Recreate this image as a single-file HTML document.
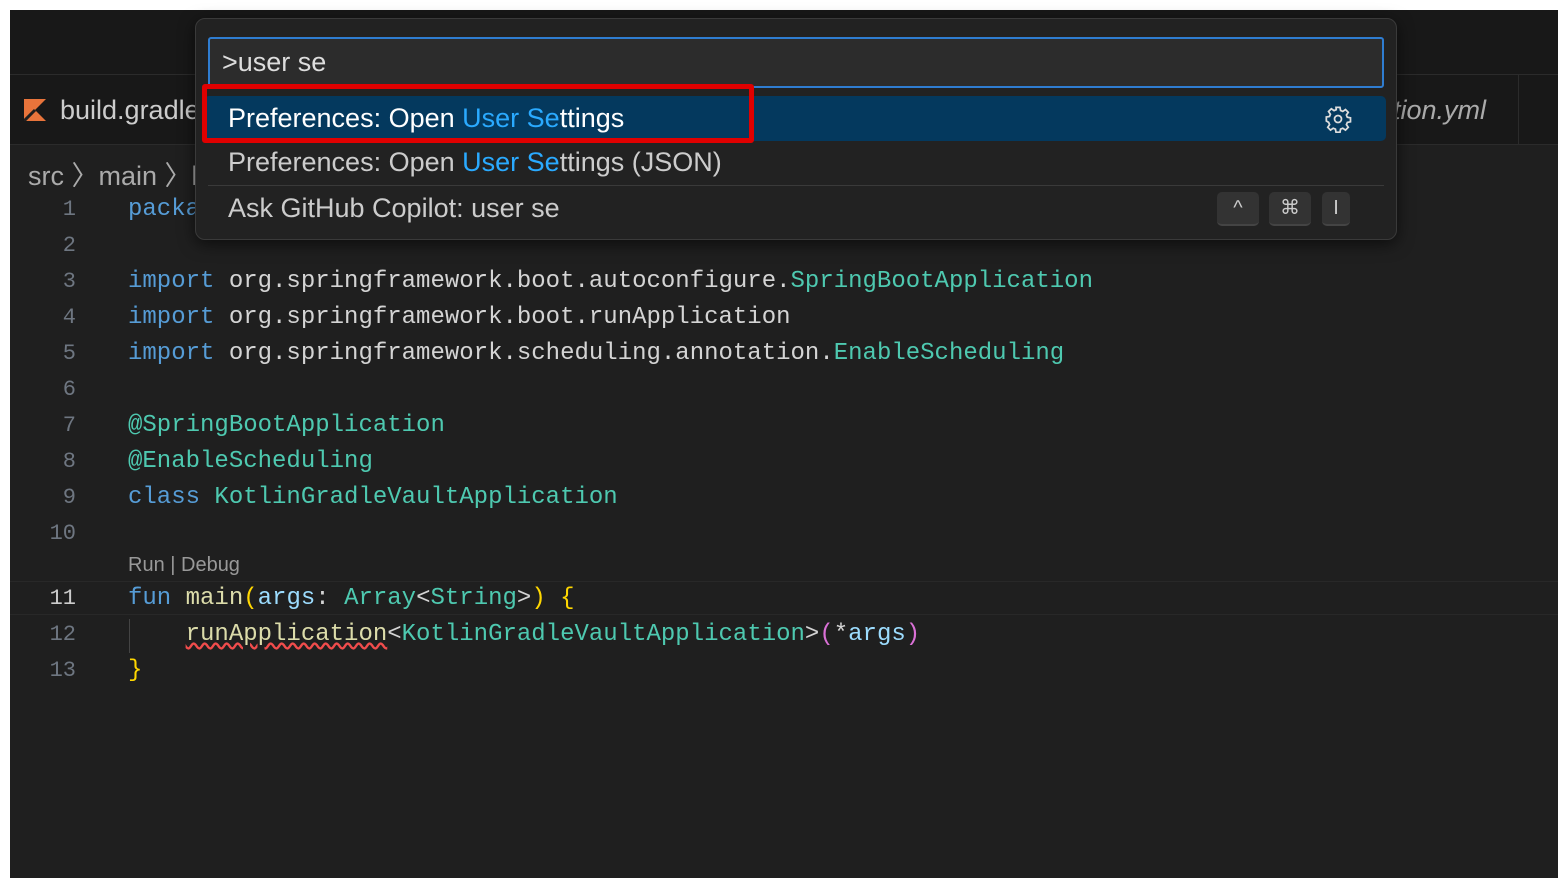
<!DOCTYPE html>
<html><head><meta charset="utf-8"><style>
*{margin:0;padding:0;box-sizing:border-box}
body{width:1568px;height:888px;background:#fff;position:relative;overflow:hidden;font-family:"Liberation Sans",sans-serif}
#win{position:absolute;left:10px;top:10px;width:1548px;height:868px;background:#1f1f1f;overflow:hidden}
.title{position:absolute;left:0;top:0;width:100%;height:65px;background:#181818;border-bottom:1px solid #2b2b2b}
.tabs{position:absolute;left:0;top:65px;width:100%;height:70px;background:#181818;border-bottom:1px solid #2b2b2b}
.abs{position:absolute;white-space:pre}
.code{font-family:"Liberation Mono",monospace;font-size:24px;line-height:36px;color:#d4d4d4}
.ln{font-family:"Liberation Mono",monospace;font-size:22px;color:#6e7681;width:58px;text-align:right;line-height:36px}
.kw{color:#569cd6}.ty{color:#4ec9b0}.fn{color:#dcdcaa}.pr{color:#9cdcfe}.br{color:#ffd700}.pk{color:#da70d6}
#pal{position:absolute;left:195px;top:18px;width:1202px;height:222px;background:#222222;border:1px solid #3a3a3a;border-radius:10px;box-shadow:0 4px 16px rgba(0,0,0,.6)}
.it{position:absolute;font-size:27px;color:#ccc;white-space:pre}
.hl{color:#2aaaff}
.key{position:absolute;top:173px;height:34px;background:#333;border-radius:5px;border-bottom:2px solid #444;color:#ccc;font-size:20px;text-align:center;line-height:32px}
</style></head><body>
<div id="win">
<div class="title"></div>
<div class="tabs">
 <svg class="abs" style="left:14px;top:24px" width="22" height="22" viewBox="0 0 22 22"><path d="M0 0H22L11 11L22 22H0Z" fill="#e8743b"/><path d="M0 22L11 11" stroke="#1f1f1f" stroke-width="3"/></svg>
 <div class="abs" style="left:50px;top:20px;font-size:27px;color:#ccc">build.gradle</div>
 <div class="abs" style="left:1368px;top:20px;font-size:27px;color:#aaa;font-style:italic">ation.yml</div>
 <div class="abs" style="left:1508px;top:0;width:1px;height:70px;background:#2b2b2b"></div>
</div>
<div class="abs" style="left:18px;top:144px;font-size:27px;color:#aaa">src 〉main 〉k</div>
<div class="abs" style="left:0;top:571px;width:100%;height:34px;border-top:1px solid #282828;border-bottom:1px solid #282828"></div>
<div class="abs ln" style="left:8px;top:182px">1</div>
<div class="abs ln" style="left:8px;top:218px">2</div>
<div class="abs ln" style="left:8px;top:254px">3</div>
<div class="abs ln" style="left:8px;top:290px">4</div>
<div class="abs ln" style="left:8px;top:326px">5</div>
<div class="abs ln" style="left:8px;top:362px">6</div>
<div class="abs ln" style="left:8px;top:398px">7</div>
<div class="abs ln" style="left:8px;top:434px">8</div>
<div class="abs ln" style="left:8px;top:470px">9</div>
<div class="abs ln" style="left:8px;top:506px">10</div>
<div class="abs ln" style="left:8px;top:571px;color:#ccc">11</div>
<div class="abs ln" style="left:8px;top:607px">12</div>
<div class="abs ln" style="left:8px;top:643px">13</div>
<div class="abs code" style="left:118px;top:182px"><span class="kw">package</span></div>
<div class="abs code" style="left:118px;top:254px"><span class="kw">import</span> org.springframework.boot.autoconfigure.<span class="ty">SpringBootApplication</span></div>
<div class="abs code" style="left:118px;top:290px"><span class="kw">import</span> org.springframework.boot.runApplication</div>
<div class="abs code" style="left:118px;top:326px"><span class="kw">import</span> org.springframework.scheduling.annotation.<span class="ty">EnableScheduling</span></div>
<div class="abs code ty" style="left:118px;top:398px">@SpringBootApplication</div>
<div class="abs code ty" style="left:118px;top:434px">@EnableScheduling</div>
<div class="abs code" style="left:118px;top:470px"><span class="kw">class</span> <span class="ty">KotlinGradleVaultApplication</span></div>
<div class="abs" style="left:118px;top:544px;font-size:20px;color:#999">Run | Debug</div>
<div class="abs code" style="left:118px;top:571px"><span class="kw">fun</span> <span class="fn">main</span><span class="br">(</span><span class="pr">args</span>: <span class="ty">Array</span>&lt;<span class="ty">String</span>&gt;<span class="br">)</span> <span class="br">{</span></div>
<div class="abs" style="left:119px;top:609px;width:1px;height:34px;background:#444"></div>
<div class="abs code" style="left:118px;top:607px">    <span class="fn" style="text-decoration:underline wavy #f14c4c">runApplication</span>&lt;<span class="ty">KotlinGradleVaultApplication</span>&gt;<span class="pk">(</span>*<span class="pr">args</span><span class="pk">)</span></div>
<div class="abs code br" style="left:118px;top:643px">}</div>
</div>
<div id="pal">
 <div class="abs" style="left:12px;top:18px;width:1176px;height:51px;background:#2c2c2c;border:2px solid #2f7dd1;border-radius:3px"></div>
 <div class="it" style="left:26px;top:28px;color:#ddd">&gt;user se</div>
 <div class="abs" style="left:8px;top:77px;width:1182px;height:45px;background:#04395e;border-radius:5px"></div>
 <div class="it" style="left:32px;top:84px;color:#fff">Preferences: Open <span class="hl">User Se</span>ttings</div>
 <svg class="abs" style="left:1128px;top:86px" width="28" height="28" viewBox="0 0 24 24" fill="none" stroke="#ddd" stroke-width="1.5"><circle cx="12" cy="12" r="3"/><path d="M10.3 2h3.4l.5 2.7 1.9.8 2.3-1.6 2.4 2.4-1.6 2.3.8 1.9 2.7.5v3.4l-2.7.5-.8 1.9 1.6 2.3-2.4 2.4-2.3-1.6-1.9.8-.5 2.7h-3.4l-.5-2.7-1.9-.8-2.3 1.6-2.4-2.4 1.6-2.3-.8-1.9L2 13.7v-3.4l2.7-.5.8-1.9-1.6-2.3 2.4-2.4 2.3 1.6 1.9-.8z"/></svg>
 <div class="it" style="left:32px;top:128px">Preferences: Open <span class="hl">User Se</span>ttings (JSON)</div>
 <div class="abs" style="left:12px;top:166px;width:1176px;height:1px;background:#3a3a3a"></div>
 <div class="it" style="left:32px;top:174px">Ask GitHub Copilot: user se</div>
 <div class="key" style="left:1021px;width:42px">^</div>
 <div class="key" style="left:1073px;width:42px">⌘</div>
 <div class="key" style="left:1126px;width:28px">I</div>
</div>
<div class="abs" style="left:202px;top:84px;width:552px;height:59px;border:5px solid #e00000;border-radius:3px"></div>
</body></html>
